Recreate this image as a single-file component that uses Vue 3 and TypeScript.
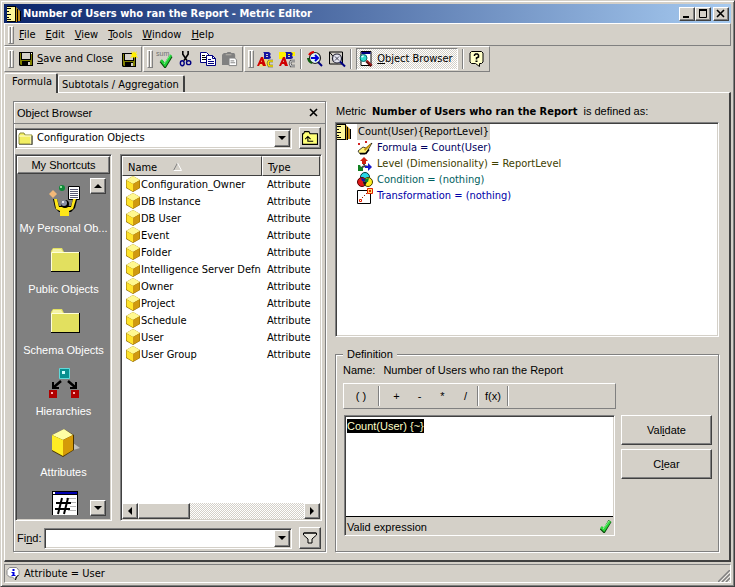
<script setup lang="ts">
import { onMounted, ref } from 'vue'

interface Definition {
  icon: string
  text: string
  tone: string
}

const menus = ['File', 'Edit', 'View', 'Tools', 'Window', 'Help']

const objects = [
  'Configuration_Owner',
  'DB Instance',
  'DB User',
  'Event',
  'Folder',
  'Intelligence Server Defn',
  'Owner',
  'Project',
  'Schedule',
  'User',
  'User Group',
]

const shortcuts = [
  { icon: 'i-person', label: 'My Personal Ob...' },
  { icon: 'i-folder-big', label: 'Public Objects' },
  { icon: 'i-folder-big', label: 'Schema Objects' },
  { icon: 'i-hierarchy', label: 'Hierarchies' },
  { icon: 'i-cube-big', label: 'Attributes' },
]

const definitions: Definition[] = [
  { icon: 'i-formula', text: 'Formula = Count(User)', tone: 'navy' },
  { icon: 'i-level', text: 'Level (Dimensionality) = ReportLevel', tone: 'olive' },
  { icon: 'i-condition', text: 'Condition = (nothing)', tone: 'teal' },
  { icon: 'i-transform', text: 'Transformation = (nothing)', tone: 'blue' },
]

const expression = ref('Count(User) {~}')
const find = ref('')
const folder = ref('Configuration Objects')
const editor = ref<HTMLTextAreaElement | null>(null)

onMounted(() => {
  editor.value?.focus()
  editor.value?.select()
})
</script>

<template>
  <svg class="defs" aria-hidden="true">
    <symbol id="i-ruler" viewBox="0 0 14 16">
      <path d="M0 0h9v16h-9z" fill="#000" />
      <path d="M0 1h8v14h-8z" fill="#fff79a" />
      <path d="M0 2h4v1h-4zM0 5h2v1h-2zM0 8h4v1h-4zM0 11h2v1h-2zM0 13h4v1h-4z" fill="#000" />
      <path d="M8 1h1l2 2v13h-3z" fill="#b8860b" />
      <path d="M8 1h1v15h-1zM10 3h1v13h-1zM13 5h1v10h-1z" fill="#000" />
      <path d="M11 3l2 2v10h-2z" fill="#c89018" />
    </symbol>
    <symbol id="i-save" viewBox="0 0 14 14">
      <path d="M0 0h14v14h-13l-1-1z" fill="#000" />
      <path d="M1 1h1v7h10v-6h1v11h-2v-4h-8v4h-1l-1-1z" fill="#808000" />
      <path d="M3 1h8v6h-8zM9 10h2v3h-2z" fill="#d4d0c8" />
      <path d="M12 1h1v1h-1z" fill="#fff" />
    </symbol>
    <symbol id="i-save-new" viewBox="0 0 16 16">
      <path d="M0 2h14v14h-13l-1-1z" fill="#000" />
      <path d="M1 3h1v7h10v-6h1v11h-2v-4h-8v4h-1l-1-1z" fill="#808000" />
      <path d="M3 3h8v6h-8zM9 12h2v3h-2z" fill="#d4d0c8" />
      <path d="M9 0l2 2 1-2 1 2 2-2-1 3h2l-2 1 2 3-3-1-1 1-1-1-3 1 2-3-2-1h2z" fill="#ffef00" />
    </symbol>
    <symbol id="i-check" viewBox="0 0 12 13">
      <path d="M1 8l3 3 6-10" fill="none" stroke="#0a4a0a" stroke-width="3.500" />
      <path d="M1 7l3 3 6-9" fill="none" stroke="#2ed63c" stroke-width="2.500" />
      <path d="M3 9l6-8" fill="none" stroke="#8df594" stroke-width="1" />
    </symbol>
    <symbol id="i-sum" viewBox="0 0 17 17">
      <text x="0" y="5" class="sum">sum</text>
      <path d="M5 10l4 5 6-10" fill="none" stroke="#0a4a0a" stroke-width="3.500" />
      <path d="M5 9l4 5 6-10" fill="none" stroke="#20d038" stroke-width="2.500" />
      <path d="M8 13l6-9" fill="none" stroke="#83f18d" stroke-width="1" />
    </symbol>
    <symbol id="i-cut" viewBox="0 0 12 15">
      <path d="M3 0v3l4 6M8 0v3l-4 6" fill="none" stroke="#000" stroke-width="1.500" />
      <ellipse cx="2.500" cy="11.500" rx="1.800" ry="2.300" fill="none" stroke="#000080" stroke-width="1.300" />
      <ellipse cx="8.500" cy="11" rx="2" ry="1.800" fill="none" stroke="#000080" stroke-width="1.300" />
    </symbol>
    <symbol id="i-copy" viewBox="0 0 16 14">
      <path d="M.5.5h6l3 3v7h-9z" fill="#fff" stroke="#000080" />
      <path d="M2 3.500h3M2 5.500h5M2 7.500h5" stroke="#000" />
      <path d="M6.500 3.500h6l3 3v7h-9z" fill="#fff" stroke="#000080" />
      <path d="M12.500 3.500v3h3M8 7.500h3M8 9.500h6M8 11.500h6" fill="none" stroke="#000080" />
    </symbol>
    <symbol id="i-paste" viewBox="0 0 17 15">
      <path d="M0 3l2-2h3l1-1h3l1 1h3l1 2v11h-14z" fill="#808080" />
      <path d="M4 3h6" stroke="#b8b4ac" />
      <path d="M7.500 6.500h6l2 2v6h-8z" fill="#fff" stroke="#808080" />
      <path d="M9 9.500h4M9 11.500h5" stroke="#808080" />
    </symbol>
    <symbol id="i-abc" viewBox="0 0 17 17">
      <path d="M4 7l4-1 6 8-10 2-3-2z" fill="#ffef2e" opacity=".5" />
      <path d="M0 15l4-9h2l3 9h-3l-1-2h-2l-1 2zM4 11h1l-1-2z" fill="#d00000" fill-rule="evenodd" />
      <path d="M6 1h6l2 2-1 1 1 3-2 1h-5v-6zM9 3v1h2v-1zM9 5v1h2v-1z" fill="#1414a0" fill-rule="evenodd" />
      <path d="M16 10h-4l-1 2 1 3h4" fill="none" stroke="#444" stroke-width="2.500" />
      <path d="M16 10h-4l-1 2 1 3h4" fill="none" stroke="#ffe800" stroke-width="1.500" />
    </symbol>
    <symbol id="i-abc2" viewBox="0 0 17 17">
      <path d="M0 1h16v4h-16zM0 5h6v3h-6z" fill="#fff000" />
      <path d="M0 15l4-9h2l3 9h-3l-1-2h-2l-1 2zM4 11h1l-1-2z" fill="#d00000" fill-rule="evenodd" />
      <path d="M6 1h6l2 2-1 1 1 3-2 1h-5v-6zM9 3v1h2v-1zM9 5v1h2v-1z" fill="#1414a0" fill-rule="evenodd" />
      <path d="M16 10h-4l-1 2 1 3h4" fill="none" stroke="#555" stroke-width="2.500" />
      <path d="M16 10h-4l-1 2 1 3h4" fill="none" stroke="#ddd" stroke-width="1" />
    </symbol>
    <symbol id="i-search" viewBox="0 0 16 16">
      <circle cx="8" cy="7" r="5.500" fill="#dff4f4" stroke="#222" stroke-width="1.200" />
      <path d="M2 4a6 6 0 0 1 5-3" fill="none" stroke="#d00" stroke-width="2" />
      <path d="M1 7a6 6 0 0 0 4 5" fill="none" stroke="#0a5a0a" stroke-width="2" />
      <path d="M4 7h7M8 4l3 3-3 3" fill="none" stroke="#0000d8" stroke-width="2" />
      <path d="M11 11l4 4" stroke="#000080" stroke-width="2" />
    </symbol>
    <symbol id="i-preview" viewBox="0 0 17 16">
      <path d="M.5.5h13v12h-13z" fill="#d4d0c8" stroke="#000" />
      <path d="M0 0l5 6" stroke="#000" />
      <circle cx="8" cy="7" r="4.500" fill="#e4e4f0" stroke="#223" stroke-width="1.200" />
      <path d="M6 5l4 4M10 5l-4 4" stroke="#445" />
      <path d="M11 10l5 5" stroke="#000080" stroke-width="2" />
    </symbol>
    <symbol id="i-browser" viewBox="0 0 15 16">
      <path d="M2.500.5h10v14h-10z" fill="#fff" stroke="#000" />
      <path d="M3 1h9v2h-9z" fill="#000080" />
      <circle cx="5" cy="7" r="3.500" fill="#30d8d0" stroke="#086868" />
      <path d="M3 6l2-1" stroke="#e8ffff" stroke-width="1.500" />
      <path d="M8 10l5 5" stroke="#5a0a0a" stroke-width="3" />
      <path d="M8 9l5 5" stroke="#e03030" stroke-width="1" />
    </symbol>
    <symbol id="i-help" viewBox="0 0 15 16">
      <path d="M2 .5h10l1.500 1.500v9l-1.500 1.500h-2v3l-4-3h-4l-1.500-1.500v-9z" fill="#ffffc8" stroke="#000" />
      <path d="M5 5v-1l1-1h2l1 1v2l-2 1v1.500M6 10.200h2" fill="none" stroke="#000" stroke-width="1.500" />
    </symbol>
    <symbol id="i-folder" viewBox="0 0 15 13">
      <path d="M1 3l1-2h4l1 2h7v9h-13z" fill="#f2ee62" stroke="#8c8c3a" />
      <path d="M1 4h12v8" fill="none" stroke="#fffde0" />
      <path d="M14 4v9h-13" fill="none" stroke="#333" />
    </symbol>
    <symbol id="i-up" viewBox="0 0 15 13">
      <path d="M.5 2.500v10h14v-10h-7l-1-2h-4l-1 2z" fill="#ffff78" stroke="#000" />
      <path d="M5.500 5v4.500h5M3 7.500l2.500-2.500 2.500 2.500" fill="none" stroke="#000" />
    </symbol>
    <symbol id="i-cube" viewBox="0 0 16 16">
      <path d="M1 4l7-4 7 4v8l-7 4-7-4z" fill="#8a6400" />
      <path d="M1 4l7-4 7 4-7 4z" fill="#fff890" />
      <path d="M1.500 4.500l6.500 3.500v7.500l-6.500-4z" fill="#ffe42c" />
      <path d="M8 8l6.500-3.500v7.500l-6.500 3.500z" fill="#d09a10" />
    </symbol>
    <symbol id="i-cube-big" viewBox="0 0 32 32">
      <path d="M25 15l7 5-10 3z" fill="#c0c0c0" />
      <path d="M4 7l12-6 10 6v15l-11 7-11-6z" fill="#4a3400" />
      <path d="M4 7l12-6 9 6-10 5z" fill="#ffffa4" />
      <path d="M4 7l11 5v16l-11-6z" fill="#ffed24" />
      <path d="M15 12l10-5v15l-10 6z" fill="#d59a08" />
    </symbol>
    <symbol id="i-folder-big" viewBox="0 0 32 32">
      <path d="M3 26h28v-19h1v20h-29z" fill="#000" />
      <path d="M3 26v-20l2-3h9l2 4h15v19z" fill="#e2e05f" />
      <path d="M3.500 26v-18.500h27.500" fill="none" stroke="#ffffd8" />
      <path d="M5 4h8l2 3h-11z" fill="#f4f2a6" />
    </symbol>
    <symbol id="i-person" viewBox="0 0 32 32">
      <circle cx="14" cy="4" r="3" fill="#108838" />
      <circle cx="13" cy="3" r="1" fill="#b0ffb8" />
      <path d="M1 10l4-4 4 4-4 4z" fill="#f2b878" />
      <path d="M20.500 2.500h11v13h-11z" fill="#fff" stroke="#000" />
      <path d="M22 5.500h8M22 7.500h8M22 9.500h8M22 11.500h8M22 13.500h8" stroke="#303050" stroke-width=".8" />
      <path d="M5 15l2 9 4 4h12l4-4 2-8-4-1-2 7h-12l-2-7z" fill="#000" />
      <path d="M6 15h3l2 8h12l2-8h3l-3 10-4 2v5h-9v-5l-4-2z" fill="#ffe719" />
      <circle cx="17" cy="20" r="4" fill="#000" />
      <circle cx="16" cy="19" r="3" fill="#8a90a8" />
      <circle cx="15" cy="18" r="1" fill="#fff" />
    </symbol>
    <symbol id="i-hierarchy" viewBox="0 0 32 32">
      <path d="M11.500 1.500h10v10h-10z" fill="#089090" stroke="#60dada" />
      <path d="M14 4h3v3h-3z" fill="#d0ffff" />
      <path d="M13 14l-7 6M20 14l7 6" stroke="#000" stroke-width="2.500" />
      <path d="M5 15v6h6M28 15v6h-6" fill="none" stroke="#000" stroke-width="2" />
      <path d="M1 23h8v8h-8zM23 23h8v8h-8z" fill="#b00000" />
      <path d="M3 25h2v2h-2zM25 25h2v2h-2z" fill="#ffb0b0" />
    </symbol>
    <symbol id="i-fact" viewBox="0 0 32 24">
      <path d="M4 0h26v24h-26z" fill="#000" />
      <path d="M5 4h24v20h-24z" fill="#fff" />
      <path d="M7 1h22v2h-22z" fill="#0000b0" />
      <path d="M5 1h2v2h-2z" fill="#fff" />
      <path d="M18 7.500h10M22 11.500h6M22 15.500h6M20 19.500h8" stroke="#b4b4b4" />
      <path d="M14 7l-4 16M20 7l-4 16M8 12h15M7 18h15" stroke="#000" stroke-width="2" />
    </symbol>
    <symbol id="i-funnel" viewBox="0 0 14 12">
      <path d="M.5 1v2l4.500 4v4h4v-4l4.500-4v-2z" fill="#e8e5dc" stroke="#000" />
      <path d="M1 1h12" stroke="#000" />
    </symbol>
    <symbol id="i-info" viewBox="0 0 13 14">
      <path d="M3 .5h7l2.500 3v4l-2.500 2.500h-1v3l-3-3h-3l-2.500-2.500v-4z" fill="#fff" stroke="#888" />
      <path d="M12 8l-2 2-1 3" fill="none" stroke="#000" />
      <path d="M6 2h2v2h-2zM5 5h3v3h1v1h-4v-1h1v-2h-1z" fill="#0000e0" />
    </symbol>
    <symbol id="i-formula" viewBox="0 0 16 16">
      <path d="M1 3l2 2M3 3l-2 2M8 1l2 2M10 1l-2 2" stroke="#d02020" />
      <path d="M1 11l5-4 3 1 6-5-4 7-3 4h-5z" fill="#fff27a" stroke="#000" stroke-width=".7" />
      <path d="M7 9l7-6-1 3-5 5z" fill="#c09010" />
      <path d="M3 13.500h6l3-4" fill="none" stroke="#000" stroke-width="1.500" />
    </symbol>
    <symbol id="i-level" viewBox="0 0 16 16">
      <path d="M7 9v-6M7 10l5 1M7 10l-4 3" fill="none" stroke="#444" stroke-width="2" />
      <path d="M7 1l4 4h-2v3h-4v-3h-2z" fill="#d02010" />
      <path d="M11 7l4 4-4 4v-3h-3v-2h3z" fill="#1818c8" />
      <path d="M1 9h2l1 2 2 1v3h-5z" fill="#108020" />
    </symbol>
    <symbol id="i-condition" viewBox="0 0 16 16">
      <circle cx="8" cy="5" r="4.500" fill="#28d8e8" stroke="#003840" />
      <circle cx="5" cy="10" r="4.500" fill="#e01818" stroke="#500" />
      <circle cx="11" cy="10" r="4.500" fill="#fff020" stroke="#443c00" />
      <path d="M4 6l4 1v3l-3-1z" fill="#1818a0" />
      <path d="M8 7l4-1-1 4h-3z" fill="#0a8030" />
      <path d="M6 10h4l-2 4z" fill="#181818" />
    </symbol>
    <symbol id="i-transform" viewBox="0 0 16 16">
      <path d="M.5 2.500h13v13h-13z" fill="#fff" stroke="#000" />
      <path d="M10.500.5h5v5h-5z" fill="#ffe070" stroke="#e02000" />
      <path d="M12 2h2v2h-2z" fill="#e02000" />
      <path d="M2.500 11.500h2v2h-2z" fill="#fff" stroke="#e02000" />
      <path d="M5 10l1-1M7 8l1-1M9 6l1-1" stroke="#a02000" />
    </symbol>
  </svg>

  <main class="window">
    <header class="titlebar">
      <svg class="title-icon"><use href="#i-ruler" /></svg>
      <h1>Number of Users who ran the Report - Metric Editor</h1>
      <div class="window-buttons">
        <button class="raised" aria-label="Minimize"><svg viewBox="0 0 12 10"><path d="M2 8h6" stroke="#000" stroke-width="2" /></svg></button>
        <button class="raised" aria-label="Maximize"><svg viewBox="0 0 12 10"><path d="M2.500 1v7.500h7v-7.500" fill="none" stroke="#000" /><path d="M2 1h8" stroke="#000" stroke-width="2" /></svg></button>
        <button class="raised close" aria-label="Close"><svg viewBox="0 0 12 10"><path d="M2 1l7 7M9 1l-7 7" stroke="#000" stroke-width="1.600" /></svg></button>
      </div>
    </header>

    <nav class="menubar thin">
      <i class="grip"></i>
      <button v-for="menu in menus" :key="menu"><u>{{ menu[0] }}</u>{{ menu.slice(1) }}</button>
    </nav>

    <div class="toolbars">
      <div class="toolbar thin">
        <i class="grip"></i>
        <button class="labelled"><svg class="s14"><use href="#i-save" /></svg><span><u>S</u>ave and Close</span></button>
        <button class="save-new" aria-label="Save as"><svg class="s16"><use href="#i-save-new" /></svg></button>
      </div>
      <div class="toolbar thin">
        <i class="grip"></i>
        <button aria-label="Validate formula"><svg class="s17"><use href="#i-sum" /></svg></button>
        <button aria-label="Cut"><svg class="s16"><use href="#i-cut" /></svg></button>
        <button aria-label="Copy"><svg class="s16"><use href="#i-copy" /></svg></button>
        <button aria-label="Paste" disabled><svg class="s16"><use href="#i-paste" /></svg></button>
      </div>
      <div class="toolbar thin">
        <i class="grip"></i>
        <button aria-label="Number format"><svg class="s17"><use href="#i-abc" /></svg></button>
        <button aria-label="Header format"><svg class="s17"><use href="#i-abc2" /></svg></button>
        <i class="rule"></i>
        <button aria-label="Search"><svg class="s16"><use href="#i-search" /></svg></button>
        <button aria-label="Preview"><svg class="s17"><use href="#i-preview" /></svg></button>
        <i class="rule"></i>
        <button class="labelled pressed" aria-pressed="true"><svg class="s16"><use href="#i-browser" /></svg><span><u>O</u>bject Browser</span></button>
        <i class="rule"></i>
        <button aria-label="Help"><svg class="s16"><use href="#i-help" /></svg></button>
      </div>
    </div>

    <div class="tabs" role="tablist">
      <button class="tab active" role="tab" aria-selected="true">Formula</button>
      <button class="tab" role="tab" aria-selected="false">Subtotals / Aggregation</button>
    </div>

    <div class="page">
      <section class="browser etched">
        <header class="browser-title">
          <h2>Object Browser</h2>
          <button aria-label="Close object browser"><svg viewBox="0 0 9 9"><path d="M1 1l7 7M8 1l-7 7" stroke="#000" stroke-width="1.600" /></svg></button>
        </header>
        <div class="pick-row">
          <div class="combo sunken">
            <svg class="folder"><use href="#i-folder" /></svg>
            <select v-model="folder" aria-label="Folder"><option>Configuration Objects</option></select>
            <span class="raised arrow"><i class="down"></i></span>
          </div>
          <button class="raised square" aria-label="Up one level"><svg class="s16"><use href="#i-up" /></svg></button>
        </div>
        <div class="panes">
          <nav class="shortcuts sunken">
            <button class="raised shortcuts-title">My Shortcuts</button>
            <div class="shortcut-list">
              <a v-for="item in shortcuts" :key="item.label" href="#"><svg><use :href="'#' + item.icon" /></svg><span>{{ item.label }}</span></a>
              <a href="#" aria-label="Facts"><svg class="partial"><use href="#i-fact" /></svg></a>
            </div>
            <button class="raised scroll to-top" aria-label="Scroll up"><i class="up"></i></button>
            <button class="raised scroll to-bottom" aria-label="Scroll down"><i class="down"></i></button>
          </nav>
          <div class="objects sunken">
            <table>
              <colgroup><col class="name-col"><col></colgroup>
              <thead>
                <tr>
                  <th><span>Name</span><svg viewBox="0 0 9 8"><path d="M4.500 0l-4 7.500" stroke="#808080" /><path d="M4.500 0l4 7.500h-8" fill="none" stroke="#fff" /></svg></th>
                  <th>Type</th>
                </tr>
              </thead>
              <tbody>
                <tr v-for="name in objects" :key="name">
                  <td><svg><use href="#i-cube" /></svg><span>{{ name }}</span></td>
                  <td>Attribute</td>
                </tr>
              </tbody>
            </table>
            <div class="scrollbar">
              <button class="raised" aria-label="Scroll left"><i class="left"></i></button>
              <span class="raised thumb"></span>
              <button class="raised end" aria-label="Scroll right"><i class="right"></i></button>
            </div>
          </div>
        </div>
        <div class="find-row">
          <label for="find">Fi<u>n</u>d:</label>
          <div class="combo sunken">
            <input id="find" v-model="find" type="text">
            <button class="raised arrow" aria-label="Recent searches"><i class="down"></i></button>
          </div>
          <button class="raised square" aria-label="Filter"><svg class="s14"><use href="#i-funnel" /></svg></button>
        </div>
      </section>

      <section class="editor">
        <p class="headline">Metric <strong>Number of Users who ran the Report</strong> is defined as:</p>
        <div class="tree sunken">
          <div class="root"><svg><use href="#i-ruler" /></svg><span>Count(User){ReportLevel}</span></div>
          <ul>
            <li v-for="item in definitions" :key="item.text" :class="item.tone"><svg><use :href="'#' + item.icon" /></svg><span>{{ item.text }}</span></li>
          </ul>
        </div>
        <section class="definition etched">
          <h2>Definition</h2>
          <p class="name"><span>Name:</span><span>Number of Users who ran the Report</span></p>
          <div class="operators thin">
            <button class="parens">( )</button>
            <i class="rule"></i>
            <button>+</button>
            <button>-</button>
            <button>*</button>
            <button>/</button>
            <i class="rule"></i>
            <button class="fx">f(x)</button>
            <i class="rule"></i>
          </div>
          <div class="formula-row">
            <div class="formula sunken">
              <textarea ref="editor" v-model="expression" aria-label="Expression" spellcheck="false"></textarea>
              <div class="valid"><span>Valid expression</span><svg><use href="#i-check" /></svg></div>
            </div>
            <div class="actions">
              <button class="raised">Val<u>i</u>date</button>
              <button class="raised">C<u>l</u>ear</button>
            </div>
          </div>
        </section>
      </section>
    </div>

    <footer class="status">
      <svg class="s14"><use href="#i-info" /></svg>
      <span>Attribute = User</span>
      <svg class="sizer" viewBox="0 0 12 12"><path d="M0 12l12-12M4 12l8-8M8 12l4-4" stroke="#808080" stroke-width="1.500" /><path d="M2 12l10-10M6 12l6-6M10 12l2-2" stroke="#fff" stroke-width=".6" /></svg>
    </footer>
  </main>
</template>

<style>
body {
  margin: 0;
}
</style>

<style scoped>
* {
  box-sizing: border-box;
}
.defs {
  display: none;
}
.sum {
  font: 7px "Liberation Sans", sans-serif;
  fill: #707070;
}
.window {
  display: flex;
  flex-direction: column;
  min-height: 100vh;
  padding: 3px;
  border: 1px solid;
  border-color: #d4d0c8 #404040 #404040 #d4d0c8;
  box-shadow: inset 1px 1px #fff, inset -1px -1px #808080;
  background: #d4d0c8;
  color: #000;
  font: 11px/14px "DejaVu Sans Condensed", "DejaVu Sans", sans-serif;
}
h1,
h2,
p,
ul {
  margin: 0;
  padding: 0;
  font-size: inherit;
  font-weight: normal;
  list-style: none;
}
button,
input,
select,
textarea {
  margin: 0;
  padding: 0;
  border: 0;
  border-radius: 0;
  outline: 0;
  background: none;
  color: inherit;
  font: inherit;
}
svg {
  flex: none;
}
.s14 {
  width: 14px;
  height: 14px;
}
.s16 {
  width: 16px;
  height: 16px;
}
.s17 {
  width: 17px;
  height: 17px;
}
.raised {
  border: 1px solid;
  border-color: #fff #404040 #404040 #fff;
  box-shadow: inset -1px -1px #808080;
  background: #d4d0c8;
}
.thin {
  border: 1px solid;
  border-color: #fff #808080 #808080 #fff;
}
.sunken {
  border: 1px solid;
  border-color: #808080 #fff #fff #808080;
  box-shadow: inset 1px 1px #404040, inset -1px -1px #d4d0c8;
}
.etched {
  border: 1px solid #808080;
  box-shadow: 1px 1px #fff, inset 1px 1px #fff;
}
.down,
.up,
.left,
.right {
  width: 0;
  height: 0;
  border: 4px solid transparent;
}
.down {
  border-top-color: #000;
  border-bottom: 0;
}
.up {
  border-bottom-color: #000;
  border-top: 0;
}
.left {
  border-right-color: #000;
  border-left: 0;
}
.right {
  border-left-color: #000;
  border-right: 0;
}
.grip {
  flex: none;
  width: 6px;
  height: 18px;
  border: 1px solid;
  border-color: #fff #808080 #808080 #fff;
  background: linear-gradient(90deg, #d4d0c8 1px, #808080 1px 2px, #fff 2px 3px, #d4d0c8 3px);
}
.rule {
  flex: none;
  width: 2px;
  height: 20px;
  border-left: 1px solid #808080;
  border-right: 1px solid #fff;
}

.titlebar {
  display: flex;
  align-items: center;
  height: 19px;
  padding: 0 2px 0 3px;
  background: linear-gradient(90deg, #0a246a, #a6caf0);
  color: #fff;
}
.title-icon {
  width: 14px;
  height: 16px;
}
h1 {
  flex: 1;
  margin-left: 2px;
  font-weight: bold;
  white-space: nowrap;
}
.window-buttons {
  display: flex;
}
.window-buttons button {
  display: flex;
  width: 16px;
  height: 14px;
  padding: 1px;
}
.window-buttons .close {
  margin-left: 2px;
}
.menubar {
  display: flex;
  align-items: center;
  height: 23px;
  padding-left: 3px;
}
.menubar button {
  padding: 0 5px;
}
.toolbars {
  display: flex;
  gap: 1px;
}
.toolbar {
  display: flex;
  align-items: center;
  height: 26px;
  padding: 0 1px 0 3px;
}
.toolbar button {
  display: flex;
  align-items: center;
  justify-content: center;
  width: 22px;
  height: 22px;
}
.toolbar .labelled {
  gap: 4px;
  width: auto;
  padding: 0 4px 0 5px;
  white-space: nowrap;
}
.toolbar .save-new {
  width: 20px;
  margin-left: 3px;
}
.toolbar .labelled.pressed {
  gap: 3px;
  margin: 0 2px;
  padding: 0 4px 0 1px;
  border: 1px solid;
  border-color: #808080 #fff #fff #808080;
  background: repeating-conic-gradient(#fff 0 25%, #d4d0c8 0 50%) 0 0 / 2px 2px;
}
.toolbar .rule {
  margin: 0 2px;
}
.tabs {
  display: flex;
  align-items: flex-end;
  height: 21px;
  margin-bottom: -1px;
}
.tab {
  height: 18px;
  padding: 0 4px 0 3px;
  border: solid;
  border-width: 1px 2px 0 1px;
  border-color: #fff #404040 #fff #fff;
  border-radius: 2px 2px 0 0;
  white-space: nowrap;
}
.tab.active {
  position: relative;
  height: 20px;
  padding: 0 4px 3px 7px;
  background: #d4d0c8;
}

.page {
  flex: 1;
  display: grid;
  grid-template-columns: 313px minmax(0, 1fr);
  gap: 9px;
  padding: 8px 10px 8px 8px;
  border: solid;
  border-width: 1px 2px 2px 1px;
  border-color: #fff #404040 #404040 #fff;
}
.browser {
  display: flex;
  flex-direction: column;
  font-family: "Liberation Sans", sans-serif;
}
.browser-title {
  display: flex;
  align-items: center;
  justify-content: space-between;
  height: 22px;
  padding: 0 7px 0 3px;
  border-bottom: 1px solid #808080;
}
.browser-title button {
  width: 9px;
  height: 9px;
}
.browser-title button svg {
  display: block;
}
.pick-row,
.find-row {
  display: flex;
  align-items: center;
  gap: 7px;
  padding: 3px 4px 0 1px;
}
.combo {
  flex: 1;
  display: flex;
  align-items: center;
  min-width: 0;
  height: 21px;
  padding: 2px 1px;
  background: #fff;
}
.combo .folder {
  width: 15px;
  height: 13px;
  margin: 0 4px 0 1px;
}
.combo select,
.combo input {
  flex: 1;
  min-width: 0;
  appearance: none;
  font-family: "DejaVu Sans Condensed", "DejaVu Sans", sans-serif;
}
.arrow,
.square,
.scroll {
  display: flex;
  align-items: center;
  justify-content: center;
}
.arrow {
  width: 16px;
  height: 17px;
}
.square {
  width: 22px;
  height: 22px;
}
.panes {
  flex: 1;
  display: flex;
  gap: 8px;
  padding: 5px 3px 4px 1px;
}
.shortcuts {
  position: relative;
  display: flex;
  flex-direction: column;
  width: 97px;
  padding: 1px;
  background: #808080;
}
.shortcuts-title {
  height: 18px;
}
.shortcut-list {
  flex: 1 1 0;
  overflow: hidden;
}
.shortcut-list a {
  display: flex;
  flex-direction: column;
  align-items: center;
  gap: 5px;
  padding-top: 10px;
  color: #fff;
  text-decoration: none;
  white-space: nowrap;
}
.shortcut-list svg {
  width: 32px;
  height: 32px;
}
.shortcut-list .partial {
  height: 24px;
  margin-top: 2px;
}
.scroll {
  position: absolute;
  right: 5px;
  width: 16px;
  height: 16px;
}
.to-top {
  top: 23px;
}
.to-bottom {
  bottom: 4px;
}
.objects {
  flex: 1;
  display: flex;
  flex-direction: column;
  justify-content: space-between;
  min-width: 0;
  padding: 1px;
  background: #fff;
  font-family: "DejaVu Sans Condensed", "DejaVu Sans", sans-serif;
}
table {
  width: 100%;
  table-layout: fixed;
  border-collapse: separate;
  border-spacing: 0;
}
.name-col {
  width: 140px;
}
th {
  height: 20px;
  padding: 3px 5px 0;
  border: 1px solid;
  border-color: #fff #404040 #404040 #fff;
  background: #d4d0c8;
  font-weight: normal;
  text-align: left;
  line-height: 14px;
}
th svg {
  width: 9px;
  height: 8px;
  margin-left: 16px;
}
td {
  height: 17px;
  padding: 0 0 0 5px;
  line-height: 17px;
  white-space: nowrap;
}
td:first-child {
  padding: 0 0 0 3px;
}
td svg {
  width: 16px;
  height: 16px;
  vertical-align: top;
}
.scrollbar {
  display: flex;
  height: 16px;
  background: repeating-conic-gradient(#fff 0 25%, #d4d0c8 0 50%) 0 0 / 2px 2px;
}
.scrollbar button {
  display: flex;
  align-items: center;
  justify-content: center;
  width: 16px;
}
.thumb {
  width: 52px;
}
.scrollbar .end {
  margin-left: auto;
}
.find-row {
  padding: 2px 4px 2px 3px;
}
.find-row label {
  margin-right: -4px;
}

.editor {
  display: flex;
  flex-direction: column;
  min-width: 0;
  font-family: "Liberation Sans", sans-serif;
}
.headline {
  padding: 3px 0 3px 1px;
  white-space: pre-wrap;
}
.headline strong {
  margin: 0 3px;
  font: bold 11px/14px "DejaVu Sans Condensed", "DejaVu Sans", sans-serif;
}
.tree {
  flex: 1;
  padding: 1px;
  background: #fff;
  font-family: "DejaVu Sans Condensed", "DejaVu Sans", sans-serif;
}
.root,
.tree li {
  display: flex;
  align-items: center;
  height: 16px;
}
.root {
  gap: 6px;
}
.root svg {
  width: 14px;
  height: 16px;
}
.root span {
  padding: 1px 1px;
  background: #d4d0c8;
}
.tree li {
  gap: 4px;
  padding-left: 20px;
}
.tree li svg {
  width: 16px;
  height: 16px;
}
.navy {
  color: #000060;
}
.olive {
  color: #404000;
}
.teal {
  color: #006060;
}
.blue {
  color: #0000a8;
}
.definition {
  margin-top: 17px;
  padding: 0 6px 15px 7px;
}
.definition h2 {
  width: max-content;
  margin: -8px 0 0;
  padding: 0 4px;
  background: #d4d0c8;
}
.name {
  display: flex;
  gap: 8px;
  padding: 2px 0 6px;
}
.operators {
  display: flex;
  align-items: center;
  width: 273px;
  height: 26px;
}
.operators button {
  width: 23px;
  height: 22px;
}
.operators .parens {
  width: 34px;
}
.operators .fx {
  width: 28px;
}
.operators .parens + .rule {
  margin-right: 5px;
}
.formula-row {
  display: flex;
  align-items: flex-start;
  gap: 6px;
  margin-top: 6px;
}
.formula {
  flex: 1;
  display: flex;
  flex-direction: column;
  height: 121px;
  padding: 1px;
  margin-left: 1px;
}
.formula textarea {
  flex: 1;
  padding: 2px 1px;
  background: #fff;
  resize: none;
}
.formula textarea::selection {
  background: #000;
  color: #ffffc8;
}
.valid {
  display: flex;
  align-items: center;
  justify-content: space-between;
  height: 18px;
  padding: 2px 1px 0;
  border-top: 1px solid #000;
}
.valid svg {
  width: 12px;
  height: 13px;
}
.actions {
  display: grid;
  gap: 4px;
}
.actions button {
  width: 91px;
  height: 30px;
}
.status {
  display: flex;
  align-items: center;
  gap: 4px;
  height: 19px;
  margin-top: 2px;
  padding-left: 1px;
  border: 1px solid;
  border-color: #808080 #fff #fff #808080;
}
.sizer {
  align-self: flex-end;
  width: 12px;
  height: 12px;
  margin-left: auto;
}
</style>
